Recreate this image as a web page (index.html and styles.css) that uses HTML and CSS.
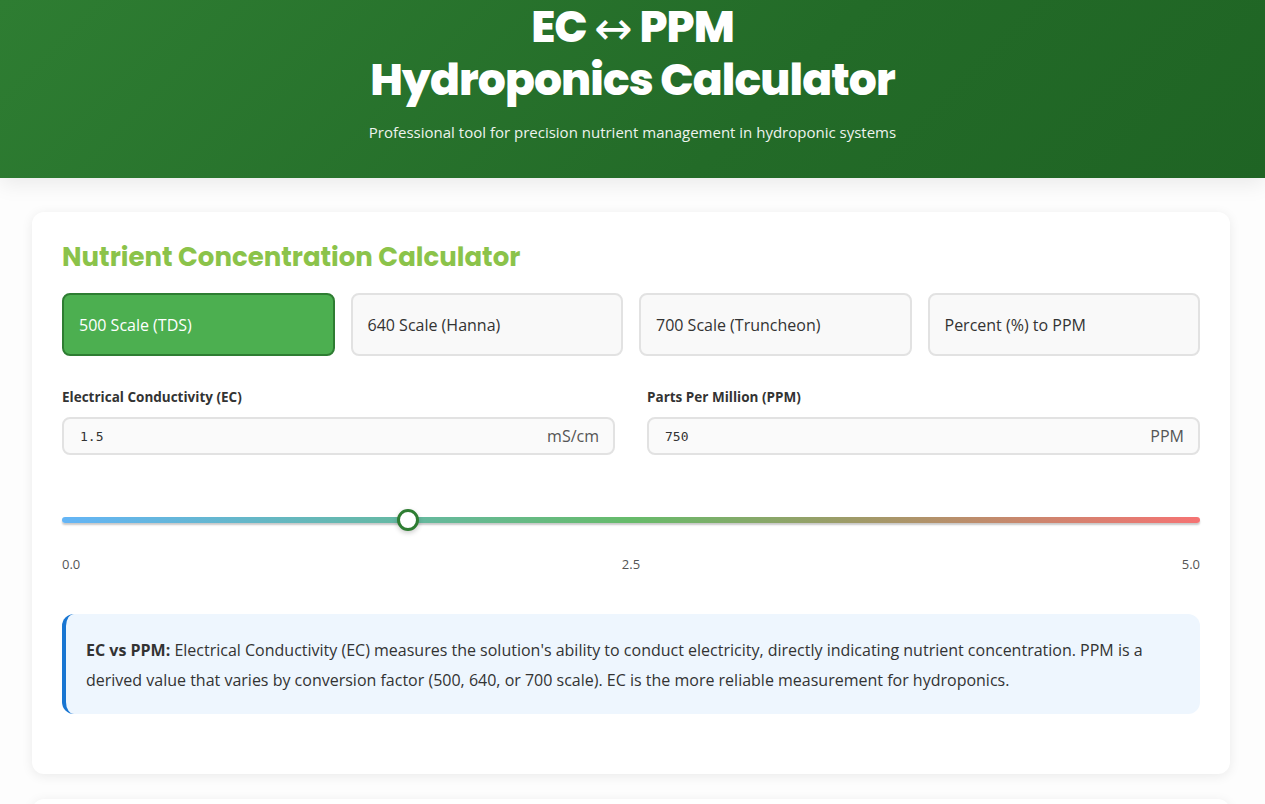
FILE: index.html
```html
<!DOCTYPE html>
<html lang="en">
<head>
  <meta charset="UTF-8">
  <meta name="viewport" content="width=device-width, initial-scale=1">
  <title>EC ↔ PPM Hydroponics Calculator</title>
  <link rel="stylesheet" href="styles.css">
</head>
<body>
  <header class="hero">
    <h1>EC <span class="arrow">↔</span> PPM<br>Hydroponics Calculator</h1>
    <p class="tagline">Professional tool for precision nutrient management in hydroponic systems</p>
  </header>

  <main class="wrap">
    <section class="card">
      <h2>Nutrient Concentration Calculator</h2>

      <div class="scales">
        <button class="scale active">500 Scale (TDS)</button>
        <button class="scale">640 Scale (Hanna)</button>
        <button class="scale">700 Scale (Truncheon)</button>
        <button class="scale">Percent (%) to PPM</button>
      </div>

      <div class="fields">
        <div class="field">
          <label for="ec">Electrical Conductivity (EC)</label>
          <div class="input-box">
            <input type="text" id="ec" value="1.5">
            <span class="unit">mS/cm</span>
          </div>
        </div>
        <div class="field">
          <label for="ppm">Parts Per Million (PPM)</label>
          <div class="input-box">
            <input type="text" id="ppm" value="750">
            <span class="unit">PPM</span>
          </div>
        </div>
      </div>

      <div class="slider">
        <input type="range" id="ecRange" min="0" max="5" step="0.1" value="1.5">
        <div class="ticks">
          <span>0.0</span>
          <span>2.5</span>
          <span>5.0</span>
        </div>
      </div>

      <div class="note">
        <strong>EC vs PPM:</strong> Electrical Conductivity (EC) measures the solution's ability to conduct electricity, directly indicating nutrient concentration. PPM is a derived value that varies by conversion factor (500, 640, or 700 scale). EC is the more reliable measurement for hydroponics.
      </div>
    </section>

    <section class="card">
      <h2>Target Ranges by Growth Stage</h2>
    </section>
  </main>
</body>
</html>
```

FILE: styles.css
```css
body {
  margin: 0;
  font-family: "Open Sans", "Noto Sans", sans-serif;
  color: #333;
  background: #fdfdfd;
}

.hero {
  background: linear-gradient(135deg, #2e7d32 0%, #236b28 60%, #1f6424 100%);
  color: #fff;
  text-align: center;
  padding: 0 20px 35px;
  box-shadow: 0 6px 20px rgba(0, 0, 0, 0.08);
}
.hero h1 {
  margin: 0;
  font-family: "Poppins", "Inter", sans-serif;
  font-weight: 800;
  font-size: 44px;
  line-height: 53px;
  letter-spacing: -0.9px;
}
.hero .arrow {
  font-family: "DejaVu Sans", sans-serif;
  font-weight: 400;
  font-size: 46px;
  vertical-align: -2px;
  line-height: 0;
}
.tagline {
  margin: 15px 0 0;
  font-size: 15px;
  line-height: 22px;
  opacity: 0.92;
}

.wrap {
  padding: 34px 35px 0 32px;
}

.card {
  background: #fff;
  border-radius: 12px;
  padding: 27px 30px 60px;
  box-shadow: 0 2px 12px rgba(0, 0, 0, 0.08);
  margin-bottom: 25px;
}
.card h2 {
  margin: 0 0 18px;
  font-family: "Poppins", "Inter", sans-serif;
  font-weight: 700;
  font-size: 26px;
  line-height: 36px;
  color: #8bc34a;
}

.scales {
  display: grid;
  grid-template-columns: repeat(4, 1fr);
  gap: 16px;
}
.scale {
  height: 63px;
  text-align: left;
  padding: 0 15px;
  font-family: "Open Sans", sans-serif;
  font-size: 16px;
  color: #333;
  background: #f9f9f9;
  border: 2px solid #e2e2e2;
  border-radius: 8px;
  cursor: pointer;
}
.scale.active {
  background: #4caf50;
  border-color: #2e7d32;
  color: #fff;
}

.fields {
  display: grid;
  grid-template-columns: 1fr 1fr;
  gap: 32px;
  margin-top: 32px;
}
.field label {
  display: block;
  font-size: 13.5px;
  line-height: 18px;
  font-weight: 700;
  color: #333;
  margin-bottom: 11px;
}
.input-box {
  display: flex;
  align-items: center;
  height: 38px;
  box-sizing: border-box;
  padding: 0 14px 0 16px;
  background: #fafafa;
  border: 2px solid #e2e2e2;
  border-radius: 8px;
}
.input-box input {
  flex: 1;
  min-width: 0;
  border: 0;
  background: transparent;
  outline: none;
  font-family: "DejaVu Sans Mono", "Liberation Mono", monospace;
  font-size: 13px;
  color: #333;
  padding: 0;
}
.unit {
  font-size: 16px;
  color: #555;
}

.slider {
  margin-top: 54px;
}
.slider input[type=range] {
  -webkit-appearance: none;
  appearance: none;
  display: block;
  width: 100%;
  height: 22px;
  margin: 0;
  background: transparent;
}
.slider input[type=range]::-webkit-slider-runnable-track {
  height: 6px;
  border-radius: 3px;
  background: linear-gradient(90deg, #64b5f6 0%, #66bb6a 50%, #a09a68 70%, #f57373 100%);
  box-shadow: 0 2px 2px rgba(0, 0, 0, 0.22);
}
.slider input[type=range]::-webkit-slider-thumb {
  -webkit-appearance: none;
  width: 22px;
  height: 22px;
  margin-top: -8px;
  box-sizing: border-box;
  border-radius: 50%;
  background: #fff;
  border: 3px solid #2e7d32;
  box-shadow: 0 2px 5px rgba(0, 0, 0, 0.2);
}
.ticks {
  display: flex;
  justify-content: space-between;
  margin-top: 24px;
  font-size: 13px;
  line-height: 18px;
  color: #555;
}

.note {
  margin-top: 41px;
  padding: 21px 20px 19px;
  background: #eef6fe;
  border-left: 4px solid #1976d2;
  border-radius: 12px;
  font-size: 16px;
  line-height: 30px;
  color: #333;
}
```
